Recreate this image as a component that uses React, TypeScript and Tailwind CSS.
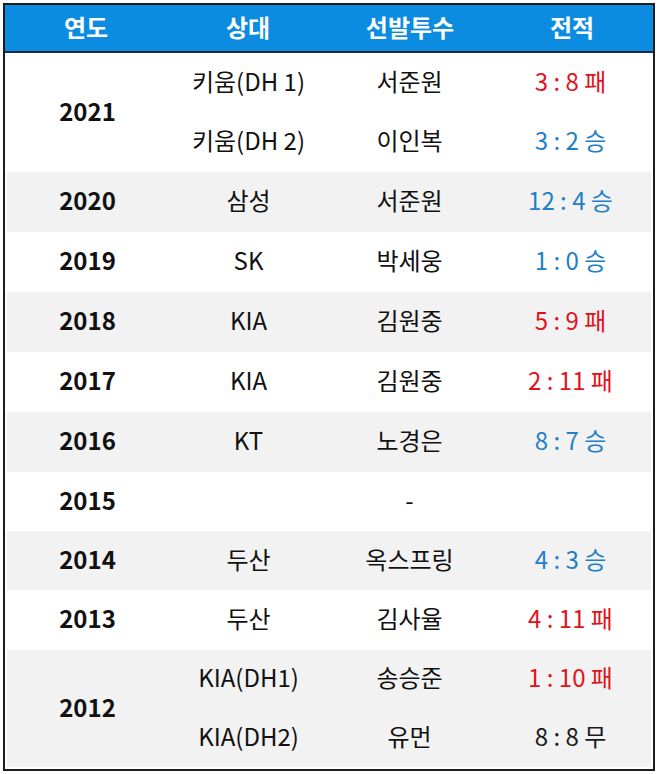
import React from "react"

type Game = { opp: string; pitcher: string; score: string; res: "W" | "L" | "D" | "" }
type Row = { year: string; games: Game[]; h: string; gray: boolean }

const rows: Row[] = [
  {
    year: "2021",
    h: "h-[119px]",
    gray: false,
    games: [
      { opp: "키움(DH 1)", pitcher: "서준원", score: "3 : 8 패", res: "L" },
      { opp: "키움(DH 2)", pitcher: "이인복", score: "3 : 2 승", res: "W" },
    ],
  },
  { year: "2020", h: "h-[60px]", gray: true, games: [{ opp: "삼성", pitcher: "서준원", score: "12 : 4 승", res: "W" }] },
  { year: "2019", h: "h-[60px]", gray: false, games: [{ opp: "SK", pitcher: "박세웅", score: "1 : 0 승", res: "W" }] },
  { year: "2018", h: "h-[60px]", gray: true, games: [{ opp: "KIA", pitcher: "김원중", score: "5 : 9 패", res: "L" }] },
  { year: "2017", h: "h-[60px]", gray: false, games: [{ opp: "KIA", pitcher: "김원중", score: "2 : 11 패", res: "L" }] },
  { year: "2016", h: "h-[60px]", gray: true, games: [{ opp: "KT", pitcher: "노경은", score: "8 : 7 승", res: "W" }] },
  { year: "2015", h: "h-[59px]", gray: false, games: [{ opp: "", pitcher: "-", score: "", res: "" }] },
  { year: "2014", h: "h-[59px]", gray: true, games: [{ opp: "두산", pitcher: "옥스프링", score: "4 : 3 승", res: "W" }] },
  { year: "2013", h: "h-[60px]", gray: false, games: [{ opp: "두산", pitcher: "김사율", score: "4 : 11 패", res: "L" }] },
  {
    year: "2012",
    h: "h-[117px]",
    gray: true,
    games: [
      { opp: "KIA(DH1)", pitcher: "송승준", score: "1 : 10 패", res: "L" },
      { opp: "KIA(DH2)", pitcher: "유먼", score: "8 : 8 무", res: "D" },
    ],
  },
]

const scoreColor = (r: Game["res"]) =>
  r === "W" ? "text-[#1f80c6]" : r === "L" ? "text-[#e0131c]" : "text-[#1a1a1a]"

export default function App() {
  return (
    <div className="w-[658px] h-[774px] bg-white pt-[3px] pl-[3px] [font-family:'Noto_Sans_CJK_KR','Noto_Sans',sans-serif]">
      <div className="w-[652px] border-2 border-[#1c1c1c] bg-white">
        <div className="grid grid-cols-4 h-[48px] bg-[#0c8ce0] border-b-2 border-[#1b2a47] text-white font-bold text-[24px]">
          {["연도", "상대", "선발투수", "전적"].map((t) => (
            <div key={t} className="flex items-center justify-center pb-[3px]">
              {t}
            </div>
          ))}
        </div>
        <div className="px-[2px] pb-[2px]">
          {rows.map((row) => (
            <div
              key={row.year}
              className={`grid grid-cols-4 ${row.h} ${row.gray ? "bg-[#f2f2f2]" : "bg-white"} text-[24px] text-[#111]`}
            >
              <div className="flex items-center justify-center font-bold pb-[4px]">{row.year}</div>
              {(["opp", "pitcher", "score"] as const).map((k) => (
                <div key={k} className="flex flex-col">
                  {row.games.map((g, i) => (
                    <div
                      key={i}
                      className={`flex-1 flex items-center justify-center pb-[4px] whitespace-pre ${k === "score" ? scoreColor(g.res) : ""}`}
                    >
                      {g[k]}
                    </div>
                  ))}
                </div>
              ))}
            </div>
          ))}
        </div>
      </div>
    </div>
  )
}
